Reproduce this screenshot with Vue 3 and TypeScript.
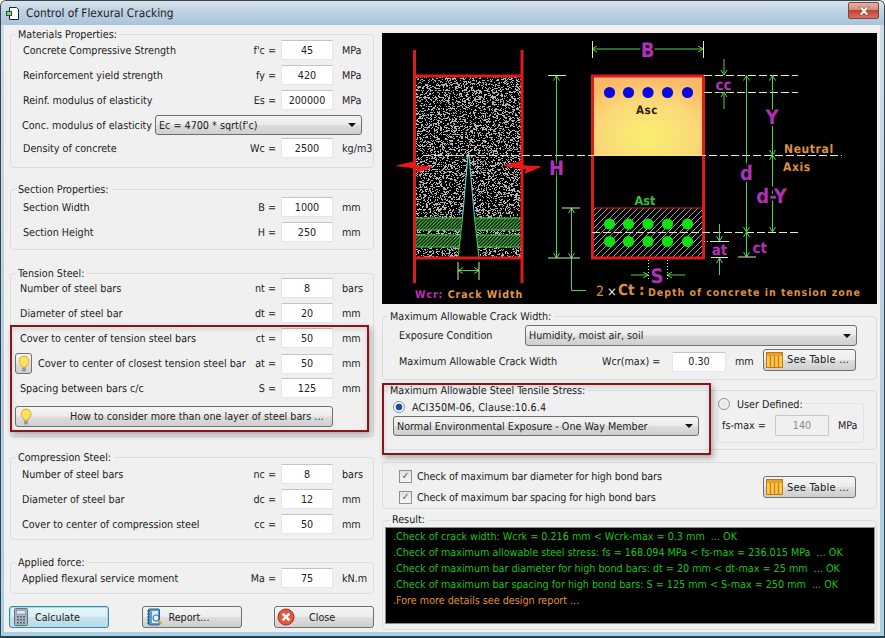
<script setup lang="ts">
interface Row { label: string; sym: string; value: string; unit: string }

const materialsA: Row[] = [
  { label: 'Concrete Compressive Strength', sym: "f'c =", value: '45', unit: 'MPa' },
  { label: 'Reinforcement yield strength', sym: 'fy =', value: '420', unit: 'MPa' },
  { label: 'Reinf. modulus of elasticity', sym: 'Es =', value: '200000', unit: 'MPa' },
]
const density: Row = { label: 'Density of concrete', sym: 'Wc =', value: '2500', unit: 'kg/m3' }
const section: Row[] = [
  { label: 'Section Width', sym: 'B =', value: '1000', unit: 'mm' },
  { label: 'Section Height', sym: 'H =', value: '250', unit: 'mm' },
]
const tensionA: Row[] = [
  { label: 'Number of steel bars', sym: 'nt =', value: '8', unit: 'bars' },
  { label: 'Diameter of steel bar', sym: 'dt =', value: '20', unit: 'mm' },
  { label: 'Cover to center of tension steel bars', sym: 'ct =', value: '50', unit: 'mm' },
]
const compression: Row[] = [
  { label: 'Number of steel bars', sym: 'nc =', value: '8', unit: 'bars' },
  { label: 'Diameter of steel bar', sym: 'dc =', value: '12', unit: 'mm' },
  { label: 'Cover to center of compression steel', sym: 'cc =', value: '50', unit: 'mm' },
]
const results: string[] = [
  '.Check of crack width: Wcrk = 0.216 mm < Wcrk-max = 0.3 mm  ... OK',
  '.Check of maximum allowable steel stress: fs = 168.094 MPa < fs-max = 236.015 MPa  ... OK',
  '.Check of maximum bar diameter for high bond bars: dt = 20 mm < dt-max = 25 mm  ... OK',
  '.Check of maximum bar spacing for high bond bars: S = 125 mm < S-max = 250 mm  ... OK',
]

// Concrete speckle of the diagram
function speckle(): string {
  let s = 12345
  const rnd = () => {
    s = (s * 1664525 + 1013904223) >>> 0
    return s / 4294967296
  }
  let d = ''
  for (let y = 77; y < 257; y += 1) {
    for (let x = 416; x < 521; x += 1) {
      if (rnd() < 0.27) d += `M${x} ${y + 0.5}h${rnd() < 0.25 ? 2 : 1}`
    }
  }
  return d
}
const speckleD = speckle()

const seg = (a: number, b: number, c: number, e: number) => `M${a} ${b}L${c} ${e}`
const up = (x: number, y: number) => `M${x - 3} ${y + 5}L${x} ${y}L${x + 3} ${y + 5}`
const down = (x: number, y: number) => `M${x - 3} ${y - 5}L${x} ${y}L${x + 3} ${y - 5}`
const left = (x: number, y: number) => `M${x + 5} ${y - 3}L${x} ${y}L${x + 5} ${y + 3}`
const right = (x: number, y: number) => `M${x - 5} ${y - 3}L${x} ${y}L${x - 5} ${y + 3}`

const dims = [
  seg(458, 270.5, 479, 270.5), left(458, 270.5), right(479, 270.5),
  seg(592, 49, 703, 49), left(592, 49), right(703, 49),
  seg(556.5, 75.5, 556.5, 258), up(556.5, 75.5), down(556.5, 258),
  seg(571.5, 208, 571.5, 290.5), seg(571.5, 290.5, 586, 290.5), up(571.5, 208), down(571.5, 258),
  seg(724, 59, 724, 75), down(724, 75), seg(724, 92, 724, 109), up(724, 92),
  seg(746.5, 75.5, 746.5, 257), up(746.5, 75.5), down(746.5, 232), up(746.5, 232), down(746.5, 257),
  seg(772.5, 75.5, 772.5, 232), up(772.5, 75.5), down(772.5, 155), up(772.5, 155), down(772.5, 232),
  seg(719.5, 224, 719.5, 241), down(719.5, 241), seg(719.5, 258, 719.5, 275), up(719.5, 258),
  seg(631, 275, 648, 275), right(648, 275), seg(667, 275, 685, 275), left(667, 275),
].join('')

const ticks = [
  seg(458, 262, 458, 280), seg(479, 262, 479, 280),
  seg(592.5, 41, 592.5, 58), seg(703.5, 41, 703.5, 58),
  seg(548, 75.5, 566, 75.5), seg(548, 258, 580, 258), seg(562, 208, 580, 208),
  seg(738, 257, 756, 257), seg(711, 241.5, 729, 241.5),
].join('')

const rebarX = [609.5, 628.5, 648, 667.5, 687.5]
</script>

<template>
  <div class="window">
    <header class="titlebar">
      <svg class="app-icon" width="15" height="15" viewBox="0 0 15 15">
        <path d="M4.5 1.5h7l2 2v10h-9z" fill="#fff" stroke="#222" />
        <rect x="1.5" y="5.5" width="5" height="4" fill="#8fd08f" stroke="#1d5a1d" />
      </svg>
      <span class="title">Control of Flexural Cracking</span>
      <button class="close-x" type="button" aria-label="Close">
        <svg width="14" height="10" viewBox="0 0 14 10">
          <path d="M2 1h3l2 2 2-2h3L8.7 5 12 9H9L7 7 5 9H2l3.3-4z" fill="#fff" stroke="#7a4a48" stroke-width=".6" />
        </svg>
      </button>
    </header>

    <main class="client">
      <section class="col-left">
        <div class="group materials">
          <span class="legend">Materials Properties:</span>
          <div v-for="r in materialsA" :key="r.sym" class="row">
            <span class="label">{{ r.label }}</span><span class="sym">{{ r.sym }}</span>
            <input class="field" readonly :value="r.value" /><span class="unit">{{ r.unit }}</span>
          </div>
          <div class="row-select">
            <span class="label">Conc. modulus of elasticity</span>
            <div class="select ec">
              <span>Ec = 4700 * sqrt(f'c)</span><i class="caret"></i>
            </div>
          </div>
          <div class="row">
            <span class="label">{{ density.label }}</span><span class="sym">{{ density.sym }}</span>
            <input class="field" readonly :value="density.value" /><span class="unit">{{ density.unit }}</span>
          </div>
        </div>

        <div class="group section">
          <span class="legend">Section Properties:</span>
          <div v-for="r in section" :key="r.sym" class="row">
            <span class="label">{{ r.label }}</span><span class="sym">{{ r.sym }}</span>
            <input class="field" readonly :value="r.value" /><span class="unit">{{ r.unit }}</span>
          </div>
        </div>

        <div class="group tension">
          <span class="legend">Tension Steel:</span>
          <div v-for="r in tensionA" :key="r.sym" class="row">
            <span class="label">{{ r.label }}</span><span class="sym">{{ r.sym }}</span>
            <input class="field" readonly :value="r.value" /><span class="unit">{{ r.unit }}</span>
          </div>
          <div class="row">
            <span class="label bulb-label">
              <button class="btn bulb-btn" type="button" aria-label="Hint">
                <svg width="12" height="18" viewBox="0 0 12 18">
                  <path d="M6 1a5 5 0 0 1 3 9c-.7.6-1 1.3-1 2.2H4c0-.9-.3-1.6-1-2.2A5 5 0 0 1 6 1z" fill="#ffe25a" stroke="#c9a227" stroke-width=".8" />
                  <rect x="4" y="12.5" width="4" height="4" rx="1" fill="#9a9a9a" />
                </svg>
              </button>
              Cover to center of closest tension steel bar
            </span>
            <span class="sym">at =</span>
            <input class="field" readonly value="50" /><span class="unit">mm</span>
          </div>
          <div class="row">
            <span class="label">Spacing between bars c/c</span><span class="sym">S =</span>
            <input class="field" readonly value="125" /><span class="unit">mm</span>
          </div>
          <button class="btn how" type="button">
            <svg width="12" height="18" viewBox="0 0 12 18">
              <path d="M6 1a5 5 0 0 1 3 9c-.7.6-1 1.3-1 2.2H4c0-.9-.3-1.6-1-2.2A5 5 0 0 1 6 1z" fill="#ffe25a" stroke="#c9a227" stroke-width=".8" />
              <rect x="4" y="12.5" width="4" height="4" rx="1" fill="#9a9a9a" />
            </svg>
            <span>How to consider more than one layer of steel bars ...</span>
          </button>
        </div>

        <div class="group compression">
          <span class="legend">Compression Steel:</span>
          <div v-for="r in compression" :key="r.sym" class="row">
            <span class="label">{{ r.label }}</span><span class="sym">{{ r.sym }}</span>
            <input class="field" readonly :value="r.value" /><span class="unit">{{ r.unit }}</span>
          </div>
        </div>

        <div class="group applied">
          <span class="legend">Applied force:</span>
          <div class="row">
            <span class="label">Applied flexural service moment</span><span class="sym">Ma =</span>
            <input class="field" readonly value="75" /><span class="unit">kN.m</span>
          </div>
        </div>

        <footer class="actions">
          <button class="btn action default" type="button">
            <svg width="14" height="18" viewBox="0 0 14 18">
              <rect x=".5" y=".5" width="13" height="17" rx="1" fill="#aab4bd" stroke="#66717c" />
              <rect x="2.5" y="2.5" width="9" height="3.5" fill="#dfe8ef" stroke="#7d8a95" stroke-width=".6" />
              <path d="M3 8h2v1.6H3zM6 8h2v1.6H6zM9 8h2v1.6H9zM3 11h2v1.6H3zM6 11h2v1.6H6zM9 11h2v1.6H9zM3 14h2v1.6H3zM6 14h2v1.6H6zM9 14h2v1.6H9z" fill="#59636d" />
            </svg>
            <span>Calculate</span>
          </button>
          <button class="btn action report" type="button">
            <svg width="18" height="19" viewBox="0 0 18 19">
              <rect x="2.5" y="1" width="11" height="16" rx="1" fill="#5d9fd0" stroke="#2a5f8e" />
              <path d="M1 3h3M1 6h3M1 9h3M1 12h3M1 15h3" stroke="#34556f" />
              <rect x="6" y="3" width="6" height="12" fill="#d8ecf8" />
              <circle cx="10" cy="10" r="3" fill="#eaf6ff" stroke="#3a78a8" stroke-width="1.2" />
              <path d="M12.5 12.5l3 3.5" stroke="#d9a92a" stroke-width="2.4" />
            </svg>
            <span>Report...</span>
          </button>
          <button class="btn action quit" type="button">
            <svg width="18" height="18" viewBox="0 0 18 18">
              <circle cx="9" cy="9" r="8" fill="#e4573f" stroke="#a8321f" />
              <path d="M5.6 5.6l6.8 6.8M12.4 5.6l-6.8 6.8" stroke="#fff" stroke-width="2.6" />
            </svg>
            <span>Close</span>
          </button>
        </footer>
      </section>

      <section class="col-right">
        <div class="diagram">
          <svg width="495" height="271" viewBox="382 33 495 271">
            <defs>
              <radialGradient id="glow" cx="0.5" cy="0.75" r="0.75">
                <stop offset="0" stop-color="#f8f070" />
                <stop offset="0.6" stop-color="#fcd878" />
                <stop offset="1" stop-color="#fbb868" />
              </radialGradient>
              <pattern id="hatchG" width="3.5" height="3.5" patternUnits="userSpaceOnUse">
                <path d="M-1 4.5L4.5 -1M-1 1L1 -1M2.5 4.5L4.5 2.5" stroke="#55cc55" stroke-width="1.1" />
              </pattern>
              <pattern id="hatchW" width="6" height="6" patternUnits="userSpaceOnUse">
                <path d="M-1 7L7 -1M-1 1L1 -1M5 7L7 5" stroke="#c8c8c8" stroke-width=".8" />
              </pattern>
            </defs>

            <path :d="speckleD" class="speck" />
            <rect x="416" y="218" width="105" height="12" fill="#000" />
            <rect x="416" y="235" width="105" height="12" fill="#000" />
            <rect x="416" y="218" width="105" height="12" fill="url(#hatchG)" />
            <rect x="416" y="235" width="105" height="12" fill="url(#hatchG)" />
            <path d="M416 218H521M416 230H521M416 235H521M416 247H521" class="green" />
            <polygon points="468.5,155 458,258 479,258" fill="#000" />
            <path d="M468 155L462.5 218M469 155L474.5 218" class="cyan" />
            <path d="M462.5 218L458 258M474.5 218L479 258" class="green" />

            <path d="M414.5 50V283M522 50V283" class="red wide" />
            <path d="M414.5 76H522M414.5 258H522" class="red wide" />
            <polygon points="397,165.7 415,161.7 413.5,165.7 432.3,166.7 416.7,172.3 418.3,168.3" class="redfill" />
            <polygon points="504.3,165.7 523.3,161 521.7,165.7 540.3,166.7 525,173.3 526.7,169" class="redfill" />

            <rect x="593" y="77" width="110" height="78" fill="url(#glow)" />
            <rect x="593" y="208" width="110" height="49" fill="url(#hatchW)" />
            <path d="M592 208H704" stroke="#d82020" stroke-width="1" />
            <rect x="592.5" y="76" width="111" height="182" fill="none" class="red wide" />
            <circle v-for="x in rebarX" :key="'b' + x" :cx="x" cy="92.5" r="5.6" fill="#0808e0" />
            <circle v-for="x in rebarX" :key="'g' + x" :cx="x" cy="224" r="5.6" fill="#10e010" />
            <circle v-for="x in rebarX" :key="'h' + x" :cx="x" cy="241.5" r="5.6" fill="#10e010" />

            <path d="M423 155.5H842" class="dash" />
            <path d="M704 75.5H798M704 92.5H798M592 232.5H798" class="dash" />
            <path d="M594 155.5H703" stroke="#f8e868" stroke-width="1" />
            <path :d="dims" class="green" />
            <path :d="ticks" class="tick" />
            <path d="M648.5 260V280M667.5 260V280M704 241.5H711" class="dots" />
            <path d="M711 257.5H728" stroke="#e8e8d0" stroke-width="1" />

            <text x="647" y="114" class="t-asc" text-anchor="middle">Asc</text>
            <text x="645" y="205" class="t-ast" text-anchor="middle">Ast</text>
            <text x="647.5" y="57" class="mag big" text-anchor="middle">B</text>
            <text x="556.5" y="175" class="mag big" text-anchor="middle">H</text>
            <text x="723.5" y="90" class="mag mid" text-anchor="middle">cc</text>
            <text x="746.5" y="180" class="mag big" text-anchor="middle">d</text>
            <text x="772" y="124" class="mag big" text-anchor="middle">Y</text>
            <text x="771.5" y="203" class="mag big" text-anchor="middle">d-Y</text>
            <text x="752.5" y="253" class="mag mid">ct</text>
            <text x="719.5" y="255" class="mag mid" text-anchor="middle">at</text>
            <text x="657" y="283" class="mag big" text-anchor="middle">S</text>
            <text x="784" y="153" class="org axis">Neutral</text>
            <text x="783" y="171" class="org axis">Axis</text>
            <text x="415" y="298" class="cap"><tspan fill="#c030c0">Wcr:</tspan> <tspan fill="#e0984a">Crack Width</tspan></text>
            <text x="596" y="296" class="org digit">2</text>
            <text x="607" y="296" class="times">×</text>
            <text x="618" y="295" class="org ctbig">Ct :</text>
            <text x="648" y="296" class="cap org">Depth of concrete in tension zone</text>
          </svg>
        </div>

        <div class="group crack">
          <span class="legend">Maximum Allowable Crack Width:</span>
          <div class="crack-row first">
            <span class="crack-label">Exposure Condition</span>
            <div class="select exposure"><span>Humidity, moist air, soil</span><i class="caret"></i></div>
          </div>
          <div class="crack-row second">
            <span class="crack-label wide-label">Maximum Allowable Crack Width</span>
            <span class="wcr">Wcr(max) =</span>
            <input class="field small" readonly value="0.30" />
            <span class="mm">mm</span>
            <button class="btn table-btn" type="button">
              <svg width="17" height="16" viewBox="0 0 17 16">
                <rect x=".5" y=".5" width="16" height="15" fill="#ffc94a" stroke="#b8791e" />
                <rect x="1" y="1" width="15" height="3" fill="#e8a020" />
                <path d="M4.5 4v11M8.5 4v11M12.5 4v11" stroke="#c9801e" stroke-width="1.4" />
              </svg>
              <span>See Table ...</span>
            </button>
          </div>
        </div>

        <div class="group stress">
          <span class="legend">Maximum Allowable Steel Tensile Stress:</span>
          <div class="stress-left">
            <label class="radio-line"><i class="radio on"></i><span class="clause">ACI350M-06, Clause:10.6.4</span></label>
            <div class="select normal"><span>Normal Environmental Exposure - One Way Member</span><i class="caret"></i></div>
          </div>
          <div class="stress-right">
            <label class="radio-line user"><i class="radio"></i><span>User Defined:</span></label>
            <div class="fs-line">
              <span>fs-max =</span>
              <input class="field disabled" readonly value="140" />
              <span>MPa</span>
            </div>
          </div>
        </div>

        <div class="group checks">
          <div class="check-list">
            <label class="check-line"><i class="check">✓</i><span class="check-text">Check of maximum bar diameter for high bond bars</span></label>
            <label class="check-line"><i class="check">✓</i><span class="check-text">Check of maximum bar spacing for high bond bars</span></label>
          </div>
          <button class="btn table-btn" type="button">
            <svg width="17" height="16" viewBox="0 0 17 16">
              <rect x=".5" y=".5" width="16" height="15" fill="#ffc94a" stroke="#b8791e" />
              <rect x="1" y="1" width="15" height="3" fill="#e8a020" />
              <path d="M4.5 4v11M8.5 4v11M12.5 4v11" stroke="#c9801e" stroke-width="1.4" />
            </svg>
            <span>See Table ...</span>
          </button>
        </div>

        <div class="group result">
          <span class="legend">Result:</span>
          <div class="console">
            <div v-for="line in results" :key="line" class="ok">{{ line }}</div>
            <div class="note">.Fore more details see design report ...</div>
          </div>
        </div>
      </section>
    </main>

    <div class="mark mark-left"></div>
    <div class="mark mark-right"></div>
  </div>
</template>

<style>
html, body { margin: 0; padding: 0; background: #fff; }
</style>

<style scoped>
.window {
  position: relative;
  box-sizing: border-box;
  width: 885px;
  height: 638px;
  overflow: hidden;
  border: 1px solid #39454d;
  border-bottom: 2px solid #24424d;
  border-radius: 6px 6px 0 0;
  background: linear-gradient(180deg, #cfdeea 0, #b4cde0 60%, #a9cfe6 100%);
  font-family: "DejaVu Sans Condensed", "DejaVu Sans", sans-serif;
  font-stretch: condensed;
  font-size: 10.7px;
  text-rendering: geometricPrecision;
  color: #222;
}
.titlebar {
  display: flex;
  align-items: center;
  height: 24px;
  padding: 0 5px 0 4px;
  background: linear-gradient(180deg, #d9e5ee 0, #bfd2e4 40%, #aac4dd 100%);
}
.app-icon { flex: none; }
.title { margin-left: 6px; font-size: 11.8px; color: #1d1d1d; }
.close-x {
  display: flex;
  align-items: center;
  justify-content: center;
  width: 31px;
  height: 17px;
  margin: -5px 0 0 auto;
  padding: 0;
  border: 1px solid #7a4844;
  border-radius: 2px;
  background: linear-gradient(180deg, #e8aea4 0, #d98a7c 45%, #bd4632 50%, #d8705c 100%);
}
.client {
  display: flex;
  height: 607px;
  margin: 0 4px 0 3px;
  background: #f0f0f0;
}
.col-left { flex: none; width: 370px; padding-left: 6px; box-sizing: border-box; }
.col-right { flex: none; margin-left: 8px; width: 495px; }

.group {
  position: relative;
  box-sizing: border-box;
  border: 1px solid #dcdcdc;
  border-radius: 4px;
}
.legend {
  position: absolute;
  top: -8px;
  left: 5px;
  padding: 0 3px 0 2px;
  background: #f0f0f0;
  line-height: 15px;
  white-space: nowrap;
}
.materials { margin-top: 9px; padding: 5px 0 9px 12px; height: 134px; }
.section { margin-top: 21px; padding: 7px 0 7px 12px; height: 61px; }
.tension { margin-top: 23px; padding: 4px 0 9px 9px; height: 164px; }
.compression { margin-top: 20px; padding: 6px 0 5px 11px; height: 83px; }
.applied { margin-top: 22px; padding: 5px 0 5px 11px; height: 32px; }

.row {
  display: grid;
  grid-template-columns: minmax(0, 1fr) auto 52px 40px;
  align-items: center;
  height: 20px;
  margin-bottom: 5px;
  white-space: nowrap;
}
.row:last-child { margin-bottom: 0; }
.sym { padding-right: 5px; }
.unit { padding-left: 9px; }
.field {
  box-sizing: border-box;
  width: 52px;
  height: 20px;
  padding: 0;
  border: 1px solid #e4e7ea;
  border-top-color: #c4c4c4;
  border-radius: 1px;
  outline: none;
  background: #fff;
  font: inherit;
  color: #222;
  text-align: center;
}
.row-select {
  display: flex;
  align-items: center;
  justify-content: space-between;
  height: 20px;
  margin-bottom: 3px;
  padding-right: 11px;
  margin-left: -1px;
  white-space: nowrap;
}
.select {
  box-sizing: border-box;
  display: flex;
  align-items: center;
  justify-content: space-between;
  padding: 0 5px 0 3px;
  border: 1px solid #6f6f6f;
  border-radius: 3px;
  background: linear-gradient(180deg, #f4f4f4 0, #ebebeb 48%, #dcdcdc 52%, #cfcfcf 100%);
  white-space: nowrap;
}
.caret {
  width: 0;
  height: 0;
  border-left: 4px solid transparent;
  border-right: 4px solid transparent;
  border-top: 4px solid #111;
}
.ec { width: 207px; height: 20px; }
.btn {
  box-sizing: border-box;
  display: flex;
  align-items: center;
  margin: 0;
  padding: 0;
  border: 1px solid #707070;
  border-radius: 3px;
  background: linear-gradient(180deg, #f5f5f5 0, #ececec 48%, #dddddd 52%, #cfcfcf 100%);
  font: inherit;
  color: #222;
  white-space: nowrap;
}
.btn svg { flex: none; }
.bulb-label { display: flex; align-items: center; margin-left: -5px; gap: 6px; }
.bulb-btn { justify-content: center; width: 17px; height: 21px; flex: none; }
.how {
  width: 318px;
  height: 21px;
  margin: 8px 0 0 -5px;
  padding-left: 4px;
}
.how span { margin-left: 38px; }

.actions {
  display: flex;
  justify-content: space-between;
  margin-top: 12px;
  margin-left: -1px;
}
.action {
  width: 100px;
  height: 22px;
  padding-left: 4px;
  gap: 8px;
}
.report { padding-left: 3px; gap: 5px; }
.quit { padding-left: 2px; gap: 14px; }
.default {
  border-color: #2f8aa8;
  box-shadow: inset 0 0 0 1px #a6e2f5;
  background: linear-gradient(180deg, #eaf6fb 0, #dbeef6 48%, #c8e2ee 52%, #bcd9e7 100%);
  gap: 7px;
}

.diagram {
  width: 495px;
  height: 271px;
  margin-top: 8px;
  background: #000;
}
.diagram svg { display: block; }
.speck { fill: none; stroke: #b4b4b4; stroke-width: 1; }
.green { fill: none; stroke: #4fd24f; stroke-width: 1; }
.cyan { fill: none; stroke: #5fdcd0; stroke-width: 1; }
.tick { fill: none; stroke: #d8f0a0; stroke-width: 1; }
.red { fill: none; stroke: #dc1c1c; }
.wide { stroke-width: 3; }
.redfill { fill: #ee1818; stroke: #ee1818; stroke-width: 1; }
.dash { fill: none; stroke: #e8e8b0; stroke-width: 1; stroke-dasharray: 8 3; }
.dots { fill: none; stroke: #e8e8e8; stroke-width: 1; stroke-dasharray: 1 2; }
.diagram text { font-family: "DejaVu Sans Condensed", "DejaVu Sans", sans-serif; font-stretch: condensed; }
.mag {
  fill: #b030b8;
  font-weight: 700;
  paint-order: stroke;
  stroke: #000;
  stroke-width: 4px;
}
.big { font-size: 20px; }
.mid { font-size: 15px; }
.t-asc { font-size: 11.5px; font-weight: 700; fill: #2a2410; letter-spacing: .6px; }
.t-ast { font-size: 12.5px; font-weight: 700; fill: #38c038; }
.org { fill: #dd8f3e; }
.axis { font-size: 12px; font-weight: 700; letter-spacing: .6px; }
.cap { font-size: 10.5px; font-weight: 700; letter-spacing: .98px; }
.digit { font-size: 14px; }
.times { font-size: 13px; fill: #e8e8e8; }
.ctbig { font-size: 15px; font-weight: 700; }

.crack { margin-top: 12px; height: 64px; }
.crack-row { display: flex; align-items: center; }
.crack-row.first { height: 21px; margin-top: 8px; }
.crack-row.second { height: 24px; margin-top: 2px; align-items: flex-end; line-height: 20px; }
.crack-row.second .table-btn { align-self: flex-start; margin-top: 1px; }
.crack-label { width: 126px; padding-left: 16px; box-sizing: content-box; white-space: nowrap; }
.wide-label { width: 203px; }
.exposure { width: 332px; height: 21px; }
.wcr { width: 70px; white-space: nowrap; }
.small { width: 54px; height: 20px; }
.mm { width: 37px; padding-left: 9px; box-sizing: border-box; }
.table-btn {
  width: 93px;
  height: 22px;
  padding-left: 2px;
  gap: 4px;
  flex: none;
}
.table-btn span { font-size: 11px; letter-spacing: .2px; }
.stress {
  display: flex;
  margin-top: 10px;
  height: 60px;
}
.stress-left { width: 334px; padding: 9px 0 0 10px; box-sizing: border-box; }
.radio-line { display: flex; align-items: center; gap: 7px; height: 14px; white-space: nowrap; }
.clause { letter-spacing: .15px; }
.radio {
  box-sizing: border-box;
  width: 12px;
  height: 12px;
  border: 1px solid #8f8f8f;
  border-radius: 50%;
  background: radial-gradient(circle, #e2e2e2 0, #fafafa 100%);
}
.radio.on {
  background: radial-gradient(circle, #15549b 0, #15549b 45%, #fff 52%, #f0f0f0 100%);
}
.normal { width: 306px; height: 20px; margin-top: 2px; }
.stress-right {
  position: relative;
  width: 147px;
  height: 40px;
  margin-top: 12px;
  border: 1px solid #e2e2e2;
  border-radius: 3px;
  box-sizing: border-box;
}
.user {
  position: absolute;
  top: -7px;
  left: 0;
  padding-right: 3px;
  background: #f0f0f0;
}
.fs-line {
  display: flex;
  align-items: center;
  height: 21px;
  margin-top: 11px;
  padding-left: 4px;
  white-space: nowrap;
}
.disabled {
  flex: none;
  width: 54px;
  height: 21px;
  margin: 0 9px 0 auto;
  border-color: #c8c8c8;
  background: #f0f0f0;
  color: #8a8a8a;
}
.fs-line span:last-child { width: 25px; }
.checks {
  display: flex;
  justify-content: space-between;
  align-items: center;
  margin-top: 12px;
  height: 47px;
  padding: 3px 20px 0 16px;
}
.check-list { display: flex; flex-direction: column; gap: 8px; }
.check-line { display: flex; align-items: center; gap: 5px; height: 13px; }
.check-text { letter-spacing: -.12px; }
.check {
  box-sizing: border-box;
  display: flex;
  align-items: center;
  justify-content: center;
  width: 13px;
  height: 13px;
  border: 1px solid #8e8f8f;
  background: linear-gradient(180deg, #dfdfdf, #f6f6f6);
  font-family: "DejaVu Sans", sans-serif;
  font-size: 10px;
  font-style: normal;
  color: #3b5f96;
}
.result {
  margin-top: 11px;
  height: 110px;
  padding: 6px 1px 0 2px;
}
.result .legend { left: 7px; top: -9px; }
.console {
  box-sizing: border-box;
  height: 97px;
  padding: 1px 7px 0;
  border: 1px solid #8a8a8a;
  background: #000;
  line-height: 16px;
  white-space: pre;
}
.ok { color: #1fc11f; }
.note { color: #e09036; }

.mark {
  position: absolute;
  box-sizing: border-box;
  border: 2px solid #8c1616;
  box-shadow: 2px 3px 6px rgba(0, 0, 0, .3), inset 0 2px 5px rgba(0, 0, 0, .12);
  pointer-events: none;
}
.mark-left { left: 9px; top: 324px; width: 359px; height: 107px; }
.mark-right { left: 381px; top: 382px; width: 329px; height: 72px; }
</style>
